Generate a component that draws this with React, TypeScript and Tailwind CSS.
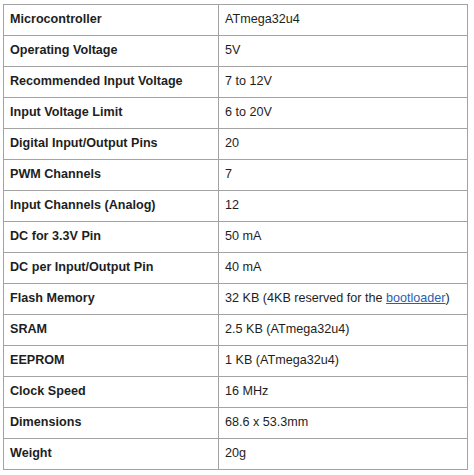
const rows: [string, React.ReactNode][] = [
  ["Microcontroller", "ATmega32u4"],
  ["Operating Voltage", "5V"],
  ["Recommended Input Voltage", "7 to 12V"],
  ["Input Voltage Limit", "6 to 20V"],
  ["Digital Input/Output Pins", "20"],
  ["PWM Channels", "7"],
  ["Input Channels (Analog)", "12"],
  ["DC for 3.3V Pin", "50 mA"],
  ["DC per Input/Output Pin", "40 mA"],
  [
    "Flash Memory",
    <>
      32 KB (4KB reserved for the{" "}
      <a href="#" className="text-[#2a5db0] underline">
        bootloader
      </a>
      )
    </>,
  ],
  ["SRAM", "2.5 KB (ATmega32u4)"],
  ["EEPROM", "1 KB (ATmega32u4)"],
  ["Clock Speed", "16 MHz"],
  ["Dimensions", "68.6 x 53.3mm"],
  ["Weight", "20g"],
];

export default function App() {
  return (
    <div className="w-[474px] h-[475px] bg-white pl-[3px] pt-[4px] font-['Liberation_Sans',Arial,sans-serif] text-[12.6px] text-[#1e1e1e]">
      <table className="w-[465px] border-collapse table-fixed">
        <colgroup>
          <col className="w-[215px]" />
          <col />
        </colgroup>
        <tbody>
          {rows.map(([label, value]) => (
            <tr key={label} className="h-[31px]">
              <td className="border border-[#a3a3a3] px-[6px] pb-[1px] font-bold leading-none">
                {label}
              </td>
              <td className="border border-[#a3a3a3] px-[6px] pb-[1px] leading-none whitespace-nowrap">
                {value}
              </td>
            </tr>
          ))}
        </tbody>
      </table>
    </div>
  );
}
